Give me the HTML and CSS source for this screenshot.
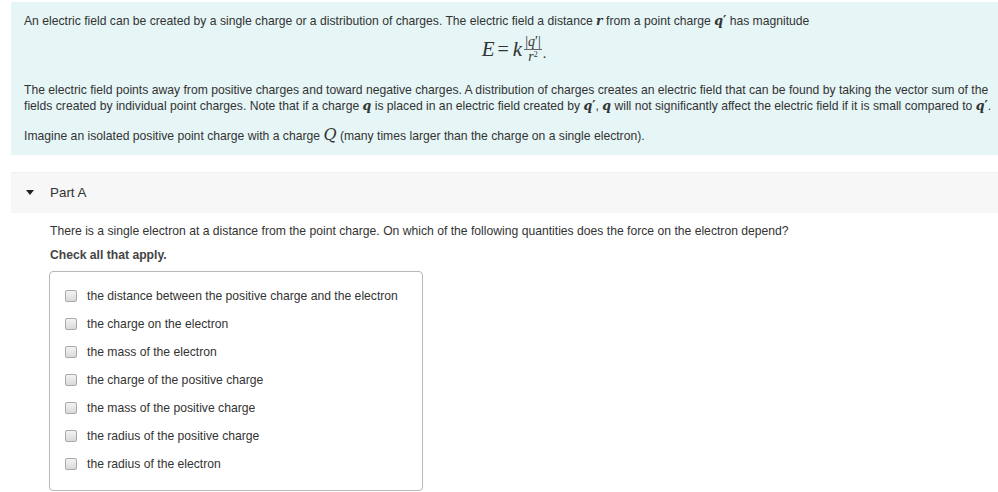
FILE: index.html
```html
<!DOCTYPE html>
<html>
<head>
<meta charset="utf-8">
<link rel="stylesheet" href="styles.css">
</head>
<body>
<div class="intro">
  <p class="line1">An electric field can be created by a single charge or a distribution of charges. The electric field a distance <i class="m">r</i> from a point charge <i class="m">q</i><span class="m">′</span> has magnitude</p>
  <div class="formula">
    <span class="fm"><i>E</i></span><span class="eq">=</span><span class="fm"><i>k</i></span><span class="frac"><span class="num">|<i>q</i>′|</span><span class="den"><i>r</i><sup>2</sup></span></span><span class="dot">.</span>
  </div>
  <p class="para2">The electric field points away from positive charges and toward negative charges. A distribution of charges creates an electric field that can be found by taking the vector sum of the<br>fields created by individual point charges. Note that if a charge <i class="m">q</i> is placed in an electric field created by <i class="m">q</i><span class="m">′</span>, <i class="m">q</i> will not significantly affect the electric field if it is small compared to <i class="m">q</i><span class="m">′</span>.</p>
  <p class="para3">Imagine an isolated positive point charge with a charge <i class="mQ">Q</i> (many times larger than the charge on a single electron).</p>
</div>

<div class="part-head">
  <span class="caret"></span>
  <span class="part-title">Part A</span>
</div>

<div class="part-body">
  <p class="question">There is a single electron at a distance from the point charge. On which of the following quantities does the force on the electron depend?</p>
  <p class="instr">Check all that apply.</p>
  <div class="options">
    <label class="opt"><span class="cb"></span>the distance between the positive charge and the electron</label>
    <label class="opt"><span class="cb"></span>the charge on the electron</label>
    <label class="opt"><span class="cb"></span>the mass of the electron</label>
    <label class="opt"><span class="cb"></span>the charge of the positive charge</label>
    <label class="opt"><span class="cb"></span>the mass of the positive charge</label>
    <label class="opt"><span class="cb"></span>the radius of the positive charge</label>
    <label class="opt"><span class="cb"></span>the radius of the electron</label>
  </div>
</div>
</body>
</html>
```

FILE: styles.css
```css
html, body {
  margin: 0;
  padding: 0;
  background: #ffffff;
}
body {
  font-family: "Liberation Sans", Arial, sans-serif;
  font-size: 12.17px;
  line-height: 16px;
  color: #333333;
  overflow: hidden;
}
p { margin: 0; }

.intro {
  margin: 2px 0 0 11px;
  background: #e6f5f6;
  padding: 11px 2px 11px 13px;
}
.m {
  font-family: "DejaVu Serif", "Liberation Serif", serif;
  font-weight: bold;
  font-size: 12.5px;
}
i.m { font-style: italic; }
.mQ {
  font-family: "DejaVu Serif", "Liberation Serif", serif;
  font-style: italic;
  font-size: 16px;
}
.para2 { white-space: nowrap; }

.formula {
  display: flex;
  justify-content: center;
  align-items: center;
  height: 30px;
  margin: 5px 0 18px 0;
  padding-left: 8px;
  font-family: "Liberation Serif", "DejaVu Serif", serif;
  color: #333;
}
.fm { font-size: 21px; }
.fm i { padding-right: 1px; }
.eq { font-size: 20px; margin: 0 4px 0 2px; }
.frac {
  display: inline-flex;
  flex-direction: column;
  align-items: center;
  font-size: 14px;
  line-height: 12px;
  margin-left: 1px;
}
.frac .num {
  border-bottom: 1px solid #666;
  padding: 0 1px 1px;
}
.frac .den { padding-top: 1px; }
.frac .den sup { font-size: 8px; line-height: 0; vertical-align: 4px; font-style: normal; }
.dot { font-size: 14px; margin-top: 10px; margin-left: 1px; }

.para3 { margin-top: 13px; }

.part-head {
  margin: 17px 0 0 11px;
  height: 41px;
  background: #f7f7f7;
  border-top: 1px solid #f0f0f0;
  box-sizing: border-box;
  display: flex;
  align-items: center;
}
.caret {
  width: 0;
  height: 0;
  border-left: 4.5px solid transparent;
  border-right: 4.5px solid transparent;
  border-top: 5px solid #222;
  margin-left: 15px;
  margin-right: 16px;
  margin-top: -1px;
}
.part-title {
  font-size: 13.4px;
  color: #333;
}

.part-body {
  padding: 10px 0 0 50px;
}
.instr {
  margin-top: 8px;
  font-weight: bold;
  color: #444;
}
.options {
  margin-top: 8px;
  margin-left: -1px;
  width: 372px;
  border: 1px solid #b8b8b8;
  border-radius: 4px;
  padding: 16px 0 18px 0;
  display: flex;
  flex-direction: column;
  gap: 12px;
}
.opt {
  display: flex;
  align-items: center;
  height: 16px;
  color: #333;
}
.cb {
  width: 10px;
  height: 10px;
  margin-left: 15px;
  margin-right: 10px;
  border: 1px solid #a9a9a9;
  border-radius: 2px;
  background: linear-gradient(#f4f4f4, #d9d9d9);
}
```
